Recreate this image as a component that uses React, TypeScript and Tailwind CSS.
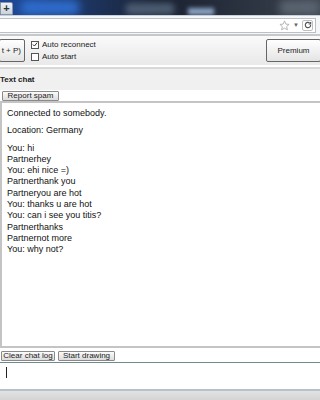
import React from 'react';

const SmallButton: React.FC<{ label: string; className?: string }> = ({ label, className = '' }) => (
  <button
    className={`h-[10px] whitespace-nowrap border border-[#8a8a8a] rounded-[1px] bg-gradient-to-b from-[#fbfbfb] to-[#dcdcdc] text-[8px] leading-[8px] text-[#222] px-0 ${className}`}
  >
    {label}
  </button>
);

const chatLines = [
  'You: hi',
  'Partnerhey',
  'You: ehi nice =)',
  'Partnerthank you',
  'Partneryou are hot',
  'You: thanks u are hot',
  'You: can i see you titis?',
  'Partnerthanks',
  'Partnernot more',
  'You: why not?',
];

const App: React.FC = () => {
  return (
    <div className="w-[320px] h-[400px] overflow-hidden bg-white font-['Liberation_Sans',Arial,sans-serif] text-[#222]">
      {/* Tab strip (blurred wallpaper behind) */}
      <div className="relative h-[15px] bg-[#182030] overflow-hidden">
        <div className="absolute inset-0 bg-gradient-to-r from-[#1d4a9c] via-[#1a2233] to-[#3a424c]" />
        <div className="absolute left-[20px] top-0 h-[15px] w-[60px] bg-[#2e6ccc] rounded-full blur-[4px]" />
        <div className="absolute left-[125px] top-[3px] h-[12px] w-[50px] bg-[#4c5b70] rounded-full blur-[3px]" />
        <div className="absolute left-[188px] top-[8px] h-[7px] w-[26px] bg-[#8aa2c2] blur-[2px]" />
        <div className="absolute left-[280px] top-0 h-[15px] w-[40px] bg-[#5a6470] blur-[4px]" />
        <div className="absolute left-0 top-[2px] w-[13px] h-[13px] bg-gradient-to-b from-[#eef3f8] to-[#c8d3df] border border-[#8a96a6] rounded-tr-[2px] flex items-center justify-center text-[11px] font-bold leading-none text-[#333]">
          +
        </div>
      </div>

      {/* Address bar */}
      <div className="h-[19px] bg-[#f4f6f8] border-t border-[#c9d0d8] flex items-center pr-[4px]">
        <div className="flex-1 h-[15px] bg-white border border-[#b8c0c8] border-l-0 flex items-center justify-end gap-[3px] pr-[2px]">
          <svg width="11" height="11" viewBox="0 0 24 24" fill="none" stroke="#b0b0b0" strokeWidth="2">
            <path d="M12 2l3 7 7 .6-5.3 4.7 1.6 7.2L12 17.8 5.7 21.5l1.6-7.2L2 9.6 9 9z" />
          </svg>
          <span className="text-[6px] text-[#666] leading-none">▼</span>
          <div className="w-[11px] h-[11px] border border-[#c0c0c0] rounded-[2px] flex items-center justify-center">
            <svg width="8" height="8" viewBox="0 0 24 24" fill="none" stroke="#555" strokeWidth="3.5">
              <path d="M20 12a8 8 0 1 1-3-6.2" />
              <path d="M20 3v6h-6" />
            </svg>
          </div>
        </div>
      </div>

      {/* Toolbar */}
      <div className="h-[31px] border-t-2 border-[#c8c8c8] bg-gradient-to-b from-[#fafafa] to-[#e9e9e9] flex items-center justify-between">
        <div className="flex items-center">
          <button className="h-[23px] w-[26px] -ml-[1px] border border-[#666] rounded-[2px] bg-gradient-to-b from-white to-[#e4e4e4] text-[8px] flex items-center justify-end pr-[3px] overflow-hidden whitespace-nowrap">
            t + P)
          </button>
          <div className="ml-[6px] flex flex-col gap-[3px] text-[8px] leading-[9px]">
            <label className="flex items-center gap-[3px]">
              <span className="w-[8px] h-[8px] border border-[#555] bg-white flex items-center justify-center">
                <svg width="7" height="7" viewBox="0 0 10 10" fill="none" stroke="#222" strokeWidth="1.6">
                  <path d="M1.5 5l2.5 2.5L8.5 2" />
                </svg>
              </span>
              Auto reconnect
            </label>
            <label className="flex items-center gap-[3px]">
              <span className="w-[8px] h-[8px] border border-[#555] bg-white" />
              Auto start
            </label>
          </div>
        </div>
        <button className="h-[23px] w-[55px] -mr-[1px] border border-[#666] rounded-[2px] bg-gradient-to-b from-white to-[#e4e4e4] text-[8px] text-[#222]">
          Premium
        </button>
      </div>

      {/* Text chat header */}
      <div className="h-[23px] mt-[2px] border-t-2 border-[#d8d8d8] bg-[#f0f0f0] flex items-center text-[8px] font-bold">
        Text chat
      </div>

      {/* Report spam */}
      <div className="h-[11px] flex items-center pl-[2px]">
        <SmallButton label="Report spam" className="w-[57px]" />
      </div>

      {/* Chat log */}
      <div className="h-[247px] border-t-2 border-l-2 border-[#c4c4c4] border-b-2 bg-white pl-[5px] pt-[5px] text-[9px] leading-[11.3px] text-[#111]">
        <p>Connected to somebody.</p>
        <p className="mt-[6px]">Location: Germany</p>
        <div className="mt-[6px]">
          {chatLines.map((line, i) => (
            <p key={i}>{line}</p>
          ))}
        </div>
      </div>

      {/* Chat buttons */}
      <div className="h-[14px] flex items-center gap-[3px] pl-[1px] pt-[1px]">
        <SmallButton label="Clear chat log" className="w-[54px]" />
        <SmallButton label="Start drawing" className="w-[57px]" />
      </div>

      {/* Input */}
      <div className="h-[29px] border-t border-[#6f8c8c] border-b-2 border-b-[#b4c2cc] bg-white pl-[6px] pt-[4px]">
        <div className="w-px h-[11px] bg-[#222]" />
      </div>

      <div className="h-[12px] bg-gradient-to-b from-[#e2e2e2] to-[#d0d0d0]" />
    </div>
  );
};

export default App;
